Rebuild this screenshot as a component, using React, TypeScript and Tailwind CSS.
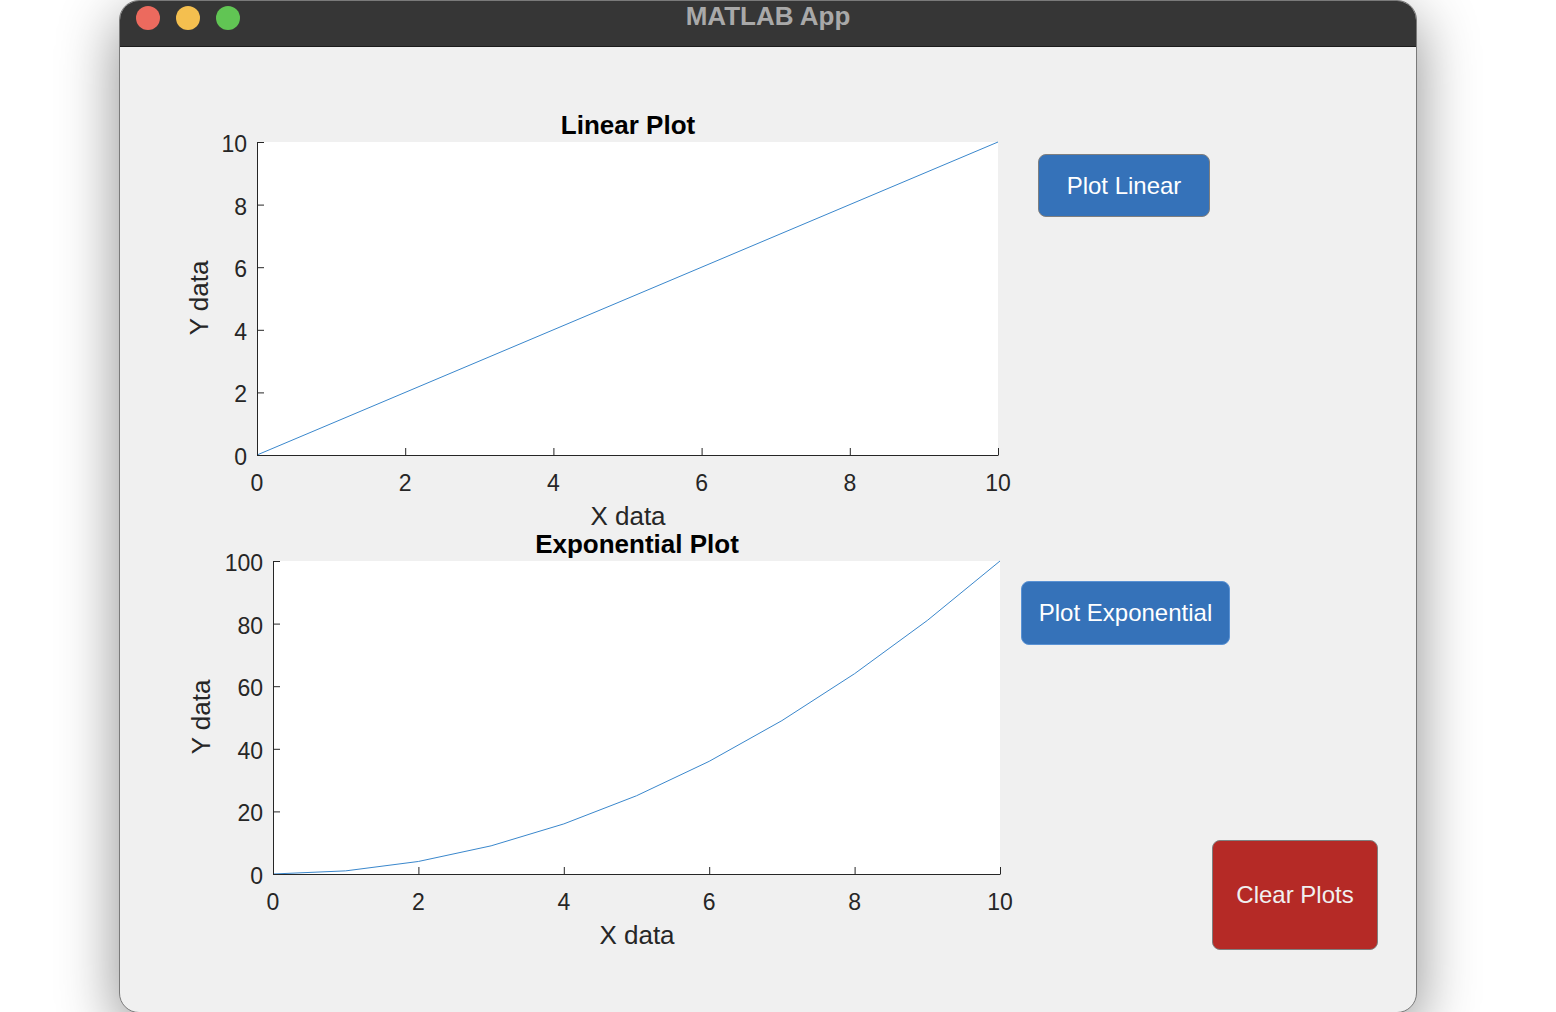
import React from "react";

type AxesProps = {
    title: string;
    box: { x0: number; x1: number; y0: number; y1: number };
    ymax: number;
    points: [number, number][];
    titleAt: [number, number];
    yTickRight: number;
    xTickBase: number;
    xLabelAt: [number, number];
    yLabelAt: [number, number];
};

const ink = "#262626";
const font = "'Liberation Sans', Arial, Helvetica, sans-serif";

function Axes({ title, box, ymax, points, titleAt, yTickRight, xTickBase, xLabelAt, yLabelAt }: AxesProps) {
    const { x0, x1, y0, y1 } = box;
    const px = (x: number) => x0 + (x / 10) * (x1 - x0);
    const py = (y: number) => y1 - (y / ymax) * (y1 - y0);
    const xs = [0, 2, 4, 6, 8, 10];
    const ys = [0, 1, 2, 3, 4, 5].map(i => (i * ymax) / 5);
    const line = points.map(([x, y]) => `${px(x)},${py(y)}`).join(" ");

    return (
        <svg width={845} height={425} viewBox="0 0 845 425" style={{ fontFamily: font }}>
            <rect x={x0} y={y0} width={x1 - x0} height={y1 - y0} fill="#ffffff" />
            <polyline points={line} fill="none" stroke="#3a87cc" strokeWidth={1} />
            <path d={`M${x0 + 0.5} ${y0} V${y1 + 0.5} H${x1 + 0.5}`} fill="none" stroke={ink} strokeWidth={1} />
            {xs.map(x => (
                <line key={`xt${x}`} x1={px(x) + 0.5} x2={px(x) + 0.5} y1={y1} y2={y1 - 7} stroke={ink} strokeWidth={1} />
            ))}
            {ys.map(y => (
                <line key={`yt${y}`} x1={x0} x2={x0 + 7} y1={py(y) + 0.5} y2={py(y) + 0.5} stroke={ink} strokeWidth={1} />
            ))}
            {xs.map(x => (
                <text key={`xl${x}`} x={px(x)} y={xTickBase} textAnchor="middle" fontSize={23} fill={ink}>
                    {x}
                </text>
            ))}
            {ys.map(y => (
                <text key={`yl${y}`} x={yTickRight} y={py(y) + 10} textAnchor="end" fontSize={23} fill={ink}>
                    {y}
                </text>
            ))}
            <text x={titleAt[0]} y={titleAt[1]} textAnchor="middle" fontSize={26} fontWeight={700} fill="#000000">
                {title}
            </text>
            <text x={xLabelAt[0]} y={xLabelAt[1]} textAnchor="middle" fontSize={26} fill={ink}>
                X data
            </text>
            <text
                x={yLabelAt[0]}
                y={yLabelAt[1]}
                textAnchor="middle"
                fontSize={26}
                fill={ink}
                transform={`rotate(-90 ${yLabelAt[0]} ${yLabelAt[1]})`}
            >
                Y data
            </text>
        </svg>
    );
}

const linear: [number, number][] = [[0, 0], [10, 10]];
const square: [number, number][] = Array.from({ length: 11 }, (_, i) => [i, i * i] as [number, number]);

export default function App() {
    return (
        <div className="h-[1012px] w-[1556px] overflow-hidden bg-white font-['Liberation_Sans',Arial,sans-serif]">
            <div className="ml-[119px] flex h-[1013px] w-[1298px] flex-col overflow-hidden rounded-[20px] border border-[#7a7a7a] bg-[#f0f0f0] shadow-[0_18px_60px_rgba(0,0,0,0.45)]">
                {/* title bar */}
                <div className="relative flex h-[46px] shrink-0 items-start gap-[16px] border-b border-[#1c1c1c] bg-[#363636] pl-[16px] pt-[5px]">
                    <span className="h-[24px] w-[24px] rounded-full bg-[#ec6a5e]" />
                    <span className="h-[24px] w-[24px] rounded-full bg-[#f4bf4f]" />
                    <span className="h-[24px] w-[24px] rounded-full bg-[#61c554]" />
                    <div className="absolute inset-x-0 top-0 text-center text-[26px] font-bold leading-[31px] text-[#a9a9a9]">
                        MATLAB App
                    </div>
                </div>

                {/* content */}
                <div className="flex flex-col pl-[55px] pt-[58px]">
                    <div className="flex items-start">
                        <Axes
                            title="Linear Plot"
                            box={{ x0: 82, x1: 823, y0: 37, y1: 350 }}
                            ymax={10}
                            points={linear}
                            titleAt={[453, 29]}
                            yTickRight={72}
                            xTickBase={386}
                            xLabelAt={[453, 420]}
                            yLabelAt={[33, 193]}
                        />
                        <button className="ml-[18px] mt-[49px] h-[63px] w-[172px] rounded-[8px] border border-[#7f7f7f] bg-[#3572b9] text-[24px] text-white">
                            Plot Linear
                        </button>
                    </div>
                    <div className="flex items-start">
                        <Axes
                            title="Exponential Plot"
                            box={{ x0: 98, x1: 825, y0: 31, y1: 344 }}
                            ymax={100}
                            points={square}
                            titleAt={[462, 23]}
                            yTickRight={88}
                            xTickBase={380}
                            xLabelAt={[462, 414]}
                            yLabelAt={[35, 187]}
                        />
                        <div className="flex flex-col items-start">
                            <button className="ml-[1px] mt-[51px] h-[64px] w-[209px] rounded-[8px] border border-[#5a92d4] bg-[#3572b9] text-[24px] text-white">
                                Plot Exponential
                            </button>
                            <button className="ml-[192px] mt-[195px] h-[110px] w-[166px] rounded-[8px] border border-[#7f7f7f] bg-[#b52a26] text-[24px] text-[#f0f0f0]">
                                Clear Plots
                            </button>
                        </div>
                    </div>
                </div>
            </div>
        </div>
    );
}
